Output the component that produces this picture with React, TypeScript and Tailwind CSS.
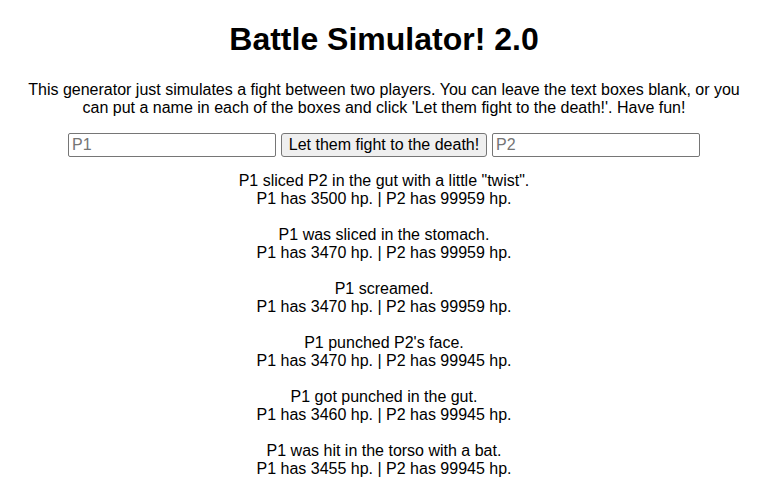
import { useState } from "react";

type Turn = { text: string; p1: number; p2: number };

const turns: Array<Turn> = [
  { text: 'P1 sliced P2 in the gut with a little "twist".', p1: 3500, p2: 99959 },
  { text: "P1 was sliced in the stomach.", p1: 3470, p2: 99959 },
  { text: "P1 screamed.", p1: 3470, p2: 99959 },
  { text: "P1 punched P2's face.", p1: 3470, p2: 99945 },
  { text: "P1 got punched in the gut.", p1: 3460, p2: 99945 },
  { text: "P1 was hit in the torso with a bat.", p1: 3455, p2: 99945 },
];

export default function App() {
  const [p1, setP1] = useState("");
  const [p2, setP2] = useState("");

  const n1 = p1 || "P1";
  const n2 = p2 || "P2";

  return (
    <div className="h-screen overflow-hidden bg-white px-2 text-center font-['Liberation_Sans',Arial,sans-serif] text-black">
      <h1 className="pt-[21px] text-[32px] font-bold leading-[37px]">
        Battle Simulator! 2.0
      </h1>
      <p className="mx-auto mt-[23px] max-w-[730px] text-base leading-[18px]">
        This generator just simulates a fight between two players. You can
        leave the text boxes blank, or you can put a name in each of the boxes
        and click 'Let them fight to the death!'. Have fun!
      </p>

      <div className="mt-4 flex justify-center gap-[5px]">
        <input
          value={p1}
          onChange={(e) => setP1(e.target.value)}
          placeholder="P1"
          className="h-[24px] w-[208px] rounded-[2px] border border-[#767676] px-[3px] text-base leading-[18px] placeholder:text-[#757575] outline-none"
        />
        <button className="h-[24px] w-[206px] rounded-[3px] border border-[#767676] bg-[#efefef] px-[6px] text-base leading-[18px] hover:bg-[#e5e5e5]">
          Let them fight to the death!
        </button>
        <input
          value={p2}
          onChange={(e) => setP2(e.target.value)}
          placeholder="P2"
          className="h-[24px] w-[208px] rounded-[2px] border border-[#767676] px-[3px] text-base leading-[18px] placeholder:text-[#757575] outline-none"
        />
      </div>

      {/* fight log: each turn is two lines followed by a blank line */}
      <div className="mt-[15px] flex flex-col gap-[18px] text-base leading-[18px]">
        {turns.map((t, i) => (
          <div key={i}>
            <div>{t.text.replace(/P1/g, n1).replace(/P2/g, n2)}</div>
            <div>
              {`${n1} has ${t.p1} hp. | ${n2} has ${t.p2} hp.`}
            </div>
          </div>
        ))}
      </div>
    </div>
  );
}
